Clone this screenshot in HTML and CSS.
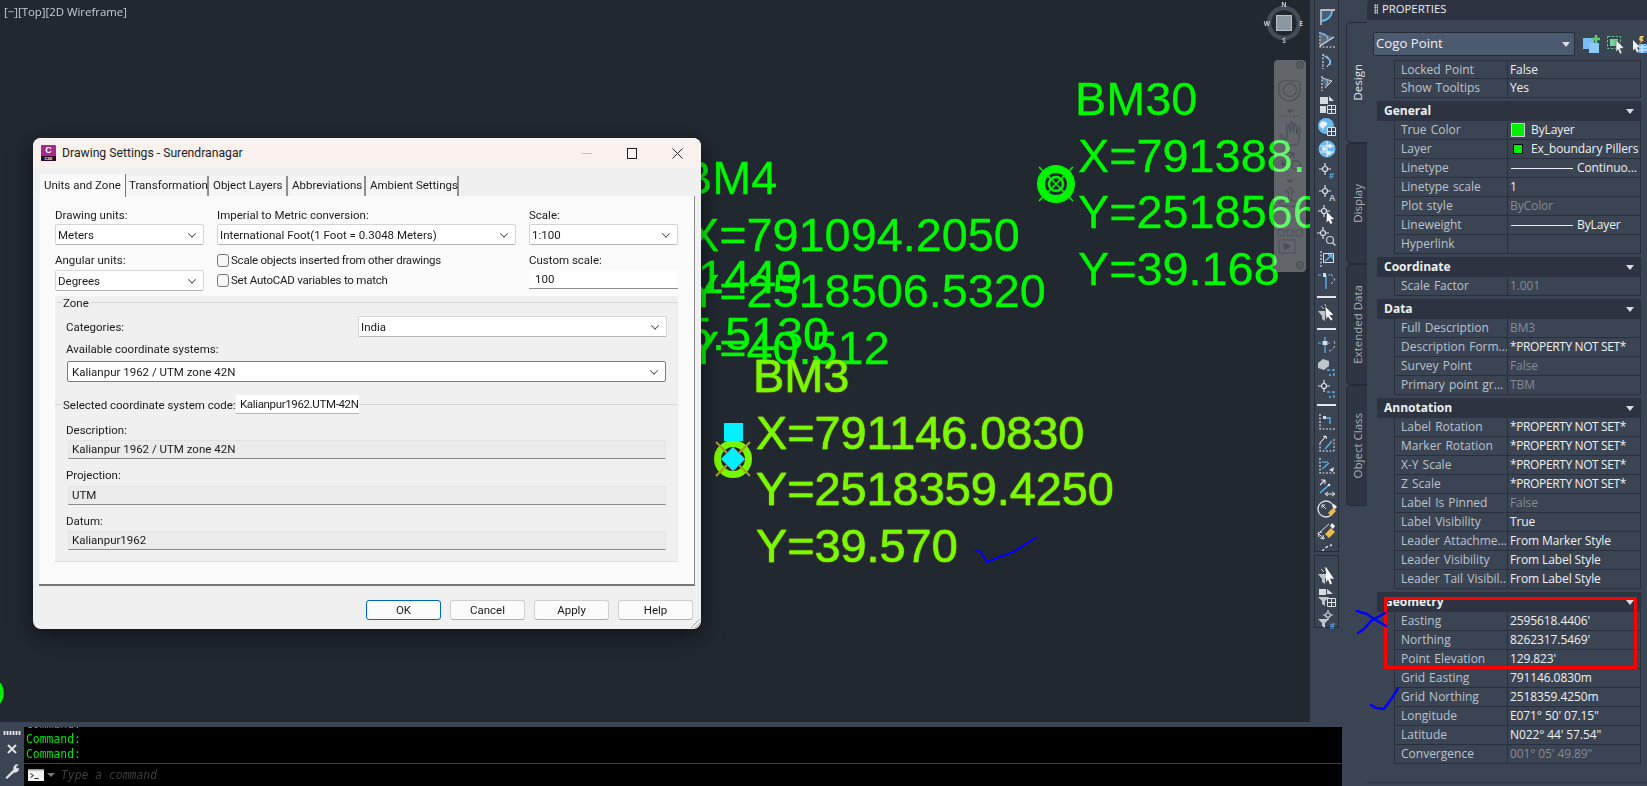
FILE: index.html
```html
<!DOCTYPE html>
<html lang="en">
<head>
<meta charset="utf-8">
<title>Drawing Settings - Surendranagar</title>
<link rel="stylesheet" href="styles.css">
</head>
<body>
<div class="app">
  <div class="left">
    <main class="canvas">
      <div class="vp-label">[−][Top][2D Wireframe]</div>

      <div class="cad c-b4"><span class="cad-t">BM4</span><span>X=791094.2050</span><span>Y=2518506.5320</span><span>Y=40.512</span></div>
      <div class="cad c-x1">1449</div>
      <div class="cad c-x2">5.5130</div>
      <div class="cad c-b30"><span class="cad-t">BM30</span><span>X=791388.</span><span>Y=2518566</span><span>Y=39.168</span></div>
      <div class="cad c-b3"><span class="cad-t">BM3</span><span>X=791146.0830</span><span>Y=2518359.4250</span><span>Y=39.570</span></div>

      <svg class="overlay" width="1310" height="722" viewBox="0 0 1310 722" fill="none">
        <g stroke="#00f500">
          <circle cx="1056" cy="184" r="15" stroke-width="8"/>
          <circle cx="1056" cy="184" r="7" stroke-width="2.5"/>
          <path d="M1039 167l34 34M1073 167l-34 34" stroke-width="1.6"/>
        </g>
        <circle cx="733" cy="459" r="15.5" stroke="#78f800" stroke-width="7"/>
        <path d="M716 442l34 34M750 442l-34 34" stroke="#a8a020" stroke-width="2"/>
        <rect x="724" y="423" width="19" height="18" fill="#00f0ff"/>
        <path d="M733 447l12 12-12 12-12-12z" fill="#00f0ff" stroke="#5a8a90"/>
        <ellipse cx="-10" cy="693" rx="12" ry="14" stroke="#00f500" stroke-width="3.5"/>
        <path d="M975 550l6 2 6 10 26-10 24-15" stroke="#0000ff" stroke-width="2"/>
      </svg>

      <div class="cube">
        <svg width="44" height="44" viewBox="0 0 44 44" fill="none">
          <circle cx="22" cy="22" r="15" stroke="#444c58" stroke-width="4.5"/>
          <rect x="14.500" y="14.500" width="15" height="15" fill="#8b96a1" stroke="#b8bfc6"/>
          <text class="cube-l" x="22" y="6">N</text>
          <text class="cube-l" x="22" y="42">S</text>
          <text class="cube-l" x="5" y="25">W</text>
          <text class="cube-l" x="39" y="25">E</text>
        </svg>
      </div>

      <div class="navbar">
        <svg width="32" height="212" viewBox="0 0 32 212" fill="none" stroke="#4a5059">
          <circle cx="26" cy="5" r="3.2" stroke-width="1.4"/>
          <path d="M24 3l4 4M28 3l-4 4" stroke-width=".8"/>
          <path d="M8 21h14a4 4 0 0 1 4 4v5a11 11 0 0 1-11 11 10 10 0 0 1-10-10v-7z" stroke-width="1.2"/>
          <circle cx="16" cy="30" r="6.5" stroke-width="1.2"/>
          <path d="M13 50h6l-3 3z" fill="#4a5059"/>
          <path d="M5 56h22" stroke-width=".6"/>
          <path d="M6 76l5 6c1 2 3 3 6 3h4c3 0 4-2 4-5l1-12c0-2-2-2-2 0l-1 6-1-9c0-2-2-2-2 0l-.5 8-1-10c0-2-2-2-2 0v10l-2-8c0-2-2-1-2 1l1 11-2 3-3-5c-1-1-3 0-3 1z" stroke-width="1.1"/>
          <path d="M8 105l12-12m0 0h-6m6 0v6M8 105h5m-5 0v-5" stroke-width="1.4"/>
          <circle cx="22" cy="105" r="4.5" stroke-width="1.2"/>
          <path d="M25 108l3 3" stroke-width="1.4"/>
          <path d="M13 120h6l-3 3z" fill="#4a5059"/>
          <path d="M16 127l-4 5h2.500v8h3v-8h2.500z" stroke-width="1.1"/>
          <path d="M5 143l5-4v2h8c4 0 8 2 8 5-4 2-8 0-10 0h-6v2z" stroke-width="1.1"/>
          <rect x="4" y="170" width="6" height="6" stroke-width="1"/>
          <rect x="13" y="170" width="6" height="6" stroke-width="1"/>
          <rect x="22" y="170" width="6" height="6" stroke-width="1"/>
          <rect x="5" y="180" width="16" height="13" stroke-width="1"/>
          <path d="M10 183l7 3.500-7 3.500z" fill="#4a5059"/>
          <circle cx="26" cy="205" r="3.2" stroke-width="1.4"/>
          <path d="M24 205h4" stroke-width="1.2"/>
        </svg>
      </div>

      <section class="dialog">
        <header class="dlg-title">
          <span class="app-ico"><b>C</b><i>C3D</i></span>
          <span class="dlg-name">Drawing Settings - Surendranagar</span>
          <span class="winbtn min"></span>
          <span class="winbtn max"></span>
          <svg class="winclose" width="11" height="11" viewBox="0 0 11 11"><path d="M.5.5l10 10M10.500.5l-10 10" stroke="#222" fill="none"/></svg>
        </header>
        <nav class="tabs">
          <span class="tab active">Units and Zone</span>
          <span class="tab t2">Transformation</span>
          <span class="tab t3">Object Layers</span>
          <span class="tab t4">Abbreviations</span>
          <span class="tab t5">Ambient Settings</span>
        </nav>
        <div class="pane">
          <div class="cols">
            <div class="col c-sm">
              <label class="lbl">Drawing units:</label>
              <div class="combo"><span>Meters</span><i class="chev"></i></div>
              <label class="lbl mt6">Angular units:</label>
              <div class="combo mt1"><span>Degrees</span><i class="chev"></i></div>
            </div>
            <div class="col c-lg">
              <label class="lbl">Imperial to Metric conversion:</label>
              <div class="combo"><span>International Foot(1 Foot = 0.3048 Meters)</span><i class="chev"></i></div>
              <div class="check mt6"><i class="box"></i>Scale objects inserted from other drawings</div>
              <div class="check mt2"><i class="box"></i>Set AutoCAD variables to match</div>
            </div>
            <div class="col c-sm">
              <label class="lbl">Scale:</label>
              <div class="combo"><span>1:100</span><i class="chev"></i></div>
              <label class="lbl mt6">Custom scale:</label>
              <div class="input mt1">100</div>
            </div>
          </div>
          <fieldset class="zone">
            <div class="legend"><span>Zone</span></div>
            <div class="cat-row">
              <label class="lbl">Categories:</label>
              <div class="combo w309"><span>India</span><i class="chev"></i></div>
            </div>
            <label class="lbl in mt3">Available coordinate systems:</label>
            <div class="combo strong"><span>Kalianpur 1962 / UTM zone 42N</span><i class="chev"></i></div>
            <div class="code-row">
              <span class="code-lbl">Selected coordinate system code:</span>
              <span class="code-val">Kalianpur1962.UTM-42N</span>
            </div>
            <label class="lbl in mt7">Description:</label>
            <div class="ro mt1">Kalianpur 1962 / UTM zone 42N</div>
            <label class="lbl in mt7">Projection:</label>
            <div class="ro mt2">UTM</div>
            <label class="lbl in mt7">Datum:</label>
            <div class="ro mt1">Kalianpur1962</div>
          </fieldset>
        </div>
        <footer class="dlg-foot">
          <button class="btn primary">OK</button>
          <button class="btn">Cancel</button>
          <button class="btn">Apply</button>
          <button class="btn">Help</button>
        </footer>
        <svg class="grip" width="12" height="12" viewBox="0 0 12 12"><path d="M11 2l-9 9M11 6l-5 5M11 10l-1 1" stroke="#a9a9a9" fill="none"/></svg>
      </section>
    </main>
    <div class="strip"></div>
    <div class="cmd">
      <div class="cmd-side">
        <span class="dots"></span>
        <svg width="12" height="12" viewBox="0 0 12 12"><path d="M2 2l8 8M10 2l-8 8" stroke="#dfe3e8" stroke-width="2"/></svg>
        <svg width="16" height="16" viewBox="0 0 16 16"><path d="M1.500 14.500l8-8a4 4 0 0 1 5-5l-2.500 2.500 1 1.500 2-.5a4 4 0 0 1-5 4.500l-7 6.500z" fill="#dfe3e8"/></svg>
      </div>
      <div class="cmd-main">
        <div class="cmd-hist">
          <div class="cmd-line">Command:</div>
          <div class="cmd-line">Command:</div>
          <div class="cmd-line">Command:</div>
        </div>
        <div class="cmd-input">
          <svg width="16" height="12" viewBox="0 0 16 12"><rect width="16" height="12" fill="#f2f2f2"/><path d="M0 0h16v1.500H0z" fill="#9a9a9a"/><path d="M2.500 4.500l3 2-3 2M6.500 9.500h4" stroke="#222" fill="none"/></svg>
          <i class="cmd-arrow"></i>
          <span class="cmd-ph">Type a command</span>
        </div>
      </div>
    </div>
  </div>

  <aside class="side">
    <div class="tools">
      <div class="tgroup g1">
        <svg class="ti" viewBox="0 0 20 20" fill="none"><path d="M18 3H4v15" stroke="#dfe3e8" stroke-width="1.300"/><path d="M5 4h10c0 5-4 9-10 10z" fill="#5aa7e0" opacity=".3"/><path d="M15 4c0 5-4 9-10 10" stroke="#6bb7ee" stroke-width="1.800"/></svg>
        <svg class="ti" viewBox="0 0 20 20" fill="none"><path d="M3 3v15h15" stroke="#dfe3e8" stroke-width="1.200" stroke-dasharray="2 1.500"/><path d="M3 17L17 8 3 4z" fill="#8a94a0" opacity=".5"/><path d="M3 17L17 8" stroke="#dfe3e8" stroke-width="1.100"/><path d="M3 4c5 1 8 2 8 8" stroke="#6bb7ee" stroke-width="1.500"/></svg>
        <svg class="ti" viewBox="0 0 20 20" fill="none"><path d="M6 3v15" stroke="#dfe3e8" stroke-width="1.200" stroke-dasharray="2 1.500"/><path d="M6 4l8 6-4 6" stroke="#dfe3e8" stroke-width="1"/><path d="M9 5c3 2 5 5 4 9" stroke="#6bb7ee" stroke-width="1.800"/></svg>
        <svg class="ti" viewBox="0 0 20 20" fill="none"><path d="M5 3v15" stroke="#dfe3e8" stroke-width="1.200" stroke-dasharray="2 1.500"/><path d="M5 5l10 3-7 7" fill="#8a94a0" fill-opacity=".5" stroke="#dfe3e8" stroke-width=".9"/><path d="M9 6c2 2 2 3 1 6" stroke="#6bb7ee" stroke-width="1.500"/></svg>
        <svg class="ti" viewBox="0 0 20 20"><path d="M3 2h8v7H3zM3 11h6v7H3z" fill="#d9dde2"/><path d="M12 1l5 5h-5z" fill="#d9dde2"/><path d="M10.500 10.500h8v8h-8zM14.500 10.500v8M10.500 14.500h8" stroke="#dfe3e8" fill="#3b4453"/></svg>
        <svg class="ti" viewBox="0 0 20 20"><circle cx="9" cy="9" r="8" fill="#6bb7ee"/><path d="M5 4c2 1 4 0 5 2s-2 3-3 5-3 0-4-2 1-4 2-5z" fill="#e8f2fa"/><path d="M10.500 10.500h8v8h-8zM14.500 10.500v8M10.500 14.500h8" stroke="#dfe3e8" fill="#3b4453"/></svg>
        <svg class="ti" viewBox="0 0 20 20" fill="none"><circle cx="10" cy="10" r="8.500" fill="#6bb7ee"/><path d="M3 7h14M3 13h14M10 2v16" stroke="#e8f2fa" stroke-width="1.200"/><circle cx="7" cy="10" r="2" fill="#e8f2fa"/><circle cx="13" cy="7" r="2" fill="#e8f2fa"/><circle cx="12" cy="14" r="2" fill="#e8f2fa"/></svg>
        <svg class="ti" viewBox="0 0 20 20" fill="none"><circle cx="8" cy="8" r="2.500" stroke="#dfe3e8" stroke-width="1.200"/><path d="M8 2v3M8 11v3M2 8h3M11 8h3" stroke="#dfe3e8" stroke-width="1.200"/><text class="ti-t" x="12" y="18" fill="#5cb3f0">#</text></svg>
        <svg class="ti" viewBox="0 0 20 20" fill="none"><circle cx="8" cy="8" r="2.500" stroke="#dfe3e8" stroke-width="1.200"/><path d="M8 2v3M8 11v3M2 8h3M11 8h3" stroke="#dfe3e8" stroke-width="1.200"/><text class="ti-t" x="12" y="18" fill="#bfc5cc">A</text></svg>
        <svg class="ti" viewBox="0 0 20 20" fill="none"><circle cx="7" cy="6" r="2.500" stroke="#dfe3e8" stroke-width="1.200"/><path d="M7 0v3M7 9v3M1 6h3M10 6h3" stroke="#dfe3e8" stroke-width="1.200"/><path d="M10 7l7 7-3.500.5 2 3.500-2 1-2-3.500-2 2z" fill="#f2f4f6"/></svg>
        <svg class="ti" viewBox="0 0 20 20" fill="none"><circle cx="6" cy="6" r="2.500" stroke="#dfe3e8" stroke-width="1.200"/><path d="M6 0v3M6 9v3M0 6h3M9 6h3" stroke="#dfe3e8" stroke-width="1.200"/><circle cx="13" cy="13" r="3.500" stroke="#c6ccd3" stroke-width="1.200"/><path d="M15.500 15.500l3 3" stroke="#c6ccd3" stroke-width="1.500"/></svg>
        <svg class="ti" viewBox="0 0 20 20" fill="none"><path d="M4 2v16" stroke="#dfe3e8" stroke-width="1.200" stroke-dasharray="2 1.500"/><path d="M6.500 4.500h10v9h-10z" stroke="#dfe3e8" stroke-width="1"/><path d="M8 12l7-6m0 0h-4m4 0v4" stroke="#6bb7ee" stroke-width="1.300"/></svg>
        <svg class="ti" viewBox="0 0 20 20" fill="none"><path d="M1 4h12" stroke="#5cb3f0" stroke-width="1.200" stroke-dasharray="3 2"/><path d="M9 4v14" stroke="#5cb3f0" stroke-width="1.400"/><path d="M14 3l4 6-4 4" stroke="#bfc5cc" stroke-dasharray="3 2"/><rect x="6" y="2" width="3" height="4" fill="#d9dde2"/></svg>
        <i class="tsep"></i>
        <svg class="ti" viewBox="0 0 20 20" fill="none"><path d="M1 8h11l-4 5v5l-3-2v-3z" fill="#bfc5cc"/><path d="M8 1l1 4M4 3l3 3" stroke="#bfc5cc"/><path d="M8 3l9 9-4 .5 3 4-2 1.500-3-4-2 3z" fill="#f7f8f9" stroke="#2a303b" stroke-width=".6"/></svg>
        <i class="tsep"></i>
        <svg class="ti" viewBox="0 0 20 20" fill="none"><path d="M1 8h12" stroke="#5cb3f0" stroke-width="1.200" stroke-dasharray="3 2"/><path d="M8 2v4M8 10v8" stroke="#5cb3f0" stroke-width="1.200"/><rect x="5.500" y="6" width="5" height="4" fill="#d9dde2"/><path d="M17 6c2 4 0 9-5 10" stroke="#bfc5cc" stroke-dasharray="3 2"/></svg>
        <svg class="ti" viewBox="0 0 20 20" fill="none"><path d="M1 6l5-4 6 2v5l-5 4-6-2z" fill="#bfc5cc"/><path d="M10 13h7v5h-5" stroke="#5cb3f0" stroke-width="1.300" stroke-dasharray="3 2"/></svg>
        <svg class="ti" viewBox="0 0 20 20" fill="none"><circle cx="7" cy="7" r="2.500" stroke="#dfe3e8" stroke-width="1.200"/><path d="M7 1v3M7 10v3M1 7h3M10 7h3" stroke="#dfe3e8" stroke-width="1.200"/><path d="M10 13h7v5h-5" stroke="#5cb3f0" stroke-width="1.300" stroke-dasharray="3 2"/></svg>
        <i class="tsep"></i>
        <svg class="ti" viewBox="0 0 20 20" fill="none"><path d="M3 3v15h15" stroke="#dfe3e8" stroke-width="1.200" stroke-dasharray="2 1.500"/><path d="M7 7h6v6" stroke="#5cb3f0" stroke-width="1.300"/><rect x="6" y="5" width="3" height="3" fill="#d9dde2"/></svg>
        <svg class="ti" viewBox="0 0 20 20" fill="none"><path d="M3 10v8h14" stroke="#dfe3e8" stroke-width="1.200" stroke-dasharray="2 1.500"/><path d="M17 6v12" stroke="#dfe3e8" stroke-dasharray="2 1.500"/><path d="M3 10l6-7m0 0l-3 .5M9 3l.5 3" stroke="#dfe3e8" stroke-width="1.100"/><path d="M8 16l7-8" stroke="#5cb3f0" stroke-width="1.400"/></svg>
        <svg class="ti" viewBox="0 0 20 20" fill="none"><path d="M3 3v15h15" stroke="#dfe3e8" stroke-width="1.200" stroke-dasharray="2 1.500"/><path d="M5 14l7-6" stroke="#5cb3f0" stroke-width="1.400"/><path d="M12 15l5-3-1 5z" fill="#d9dde2"/><path d="M5 7h6" stroke="#5cb3f0" stroke-width="1.200"/></svg>
        <svg class="ti" viewBox="0 0 20 20" fill="none"><path d="M3 8l5-5m0 0H4m4 0v4" stroke="#dfe3e8" stroke-width="1.100"/><path d="M3 16L13 7" stroke="#5cb3f0" stroke-width="1.600"/><path d="M8 17h10m-3-2l3 2-3 2M8 17l3-2m-3 2l3 2" stroke="#dfe3e8" stroke-width="1"/><circle cx="12" cy="8" r="1.300" fill="#dfe3e8"/></svg>
        <svg class="ti" viewBox="0 0 20 20" fill="none"><circle cx="9" cy="10" r="8" stroke="#dfe3e8" stroke-width="1.300"/><path d="M5 6l4 4m-4-4h3m-3 0v3" stroke="#dfe3e8" stroke-width="1"/><path d="M11 14l5-5 3 3-5 5z" fill="#f0b84c"/><path d="M15 7l2-2 3 3-2 2z" fill="#f2f4f6"/></svg>
        <svg class="ti" viewBox="0 0 20 20" fill="none"><path d="M1 12l6 6M1 12l4-1M1 12l1 4M7 18l-1-4M7 18l-4-1M3 11l9-8" stroke="#dfe3e8" stroke-width="1"/><path d="M8 13l6-6 4 4-6 6z" fill="#f0b84c"/><path d="M13 5l2-3 3 3-2 3z" fill="#f2f4f6"/></svg>
        <svg class="ti" viewBox="0 0 20 20" fill="none"><path d="M2 18C3 9 7 4 15 2" stroke="#dfe3e8" stroke-width="1.300" stroke-dasharray="3 2"/><rect x="10" y="8" width="9" height="11" fill="#f2f4f6"/><path d="M11 9h7v2.500h-7z" fill="#3d8fd6"/><path d="M11.500 13h2m1 0h2M11.500 15h2m1 0h2M11.500 17.200h2m1 0h2" stroke="#3d8fd6" stroke-width="1.200"/></svg>
      </div>
      <div class="tgroup g2">
        <svg class="ti" viewBox="0 0 20 20" fill="none"><path d="M1 8h11l-4 5v5l-3-2v-3z" fill="#bfc5cc"/><path d="M8 1l1 4M4 3l3 3" stroke="#bfc5cc"/><path d="M9 1l8 12-4-.5 2 5-2 1-2-5-2 3z" fill="#f7f8f9"/></svg>
        <svg class="ti" viewBox="0 0 20 20"><path d="M2 1h7v6H2zM10 1l6 5h-6z" fill="#d9dde2"/><path d="M1 9h11l-4 4v5l-3-2v-3z" fill="#bfc5cc"/><path d="M10.500 10.500h8v8h-8zM14.500 10.500v8M10.500 14.500h8" stroke="#dfe3e8" fill="#3b4453"/></svg>
        <svg class="ti" viewBox="0 0 20 20" fill="none"><path d="M1 9h11l-4 4v5l-3-2v-3z" fill="#bfc5cc"/><circle cx="11" cy="5" r="2.300" stroke="#dfe3e8" stroke-width="1.100"/><path d="M11 0v2M11 8v2M6 5h2M14 5h2" stroke="#dfe3e8" stroke-width="1.100"/><text class="ti-t" x="13" y="19" fill="#5cb3f0">#</text></svg>
      </div>
    </div>

    <div class="vtabs">
      <div class="vtab on"><span>Design</span></div>
      <div class="vtab"><span>Display</span></div>
      <div class="vtab"><span>Extended Data</span></div>
      <div class="vtab"><span>Object Class</span></div>
    </div>

    <div class="main">
      <div class="ptitle"><i class="gripdots"></i><span>PROPERTIES</span></div>
      <div class="ptools">
        <div class="pselect"><span>Cogo Point</span><i class="tri"></i></div>
        <svg width="18" height="18" viewBox="0 0 18 18"><rect y="3" width="11" height="11" fill="#79bdf2"/><rect x="6" y="8" width="10" height="10" fill="#8cc9f7"/><path d="M13 0v8M9 4h8" stroke="#5bd07c" stroke-width="2.400"/></svg>
        <svg width="18" height="20" viewBox="0 0 18 20"><rect x=".5" y="1.500" width="13" height="12" fill="none" stroke="#55cf7e" stroke-dasharray="2.500 1.500"/><rect x="3" y="4" width="8" height="7" fill="#73d49a"/><path d="M9 5l8 8-4 .5 2 4.500-2 1-2-4.500-2 2.500z" fill="#eef0f2" stroke="#3b4453" stroke-width=".5"/></svg>
        <svg class="lastico" width="14" height="20" viewBox="0 0 14 20"><path d="M0 5l7 7-3 .5 2 4-2 1-2-4-2 2z" fill="#eef0f2"/><path d="M7 1l-1 4 2 1-2 3 5-4-2-1 2-3z" fill="#e6c560"/><path d="M6 9h8v9H6z" fill="#6db8ee"/><path d="M6 12h8M6 15h8M9 9v9" stroke="#e8f2fa"/></svg>
      </div>

      <div class="rows top">
        <div class="row"><span>Locked Point</span><span>False</span></div>
        <div class="row"><span>Show Tooltips</span><span>Yes</span></div>
      </div>

      <div class="sec"><b>General</b><i class="tri"></i></div>
      <div class="rows">
        <div class="row"><span>True Color</span><span class="val"><i class="sw big"></i>ByLayer</span></div>
        <div class="row"><span>Layer</span><span class="val"><i class="sw small"></i>Ex_boundary Pillers</span></div>
        <div class="row"><span>Linetype</span><span class="val"><i class="ln"></i>Continuo...</span></div>
        <div class="row"><span>Linetype scale</span><span>1</span></div>
        <div class="row"><span>Plot style</span><span class="dim">ByColor</span></div>
        <div class="row"><span>Lineweight</span><span class="val"><i class="ln"></i>ByLayer</span></div>
        <div class="row"><span>Hyperlink</span><span></span></div>
      </div>

      <div class="sec"><b>Coordinate</b><i class="tri"></i></div>
      <div class="rows">
        <div class="row"><span>Scale Factor</span><span class="dim">1.001</span></div>
      </div>

      <div class="sec"><b>Data</b><i class="tri"></i></div>
      <div class="rows">
        <div class="row"><span>Full Description</span><span class="dim">BM3</span></div>
        <div class="row"><span>Description Form...</span><span class="caps">*PROPERTY NOT SET*</span></div>
        <div class="row"><span>Survey Point</span><span class="dim">False</span></div>
        <div class="row"><span>Primary point gr...</span><span class="dim">TBM</span></div>
      </div>

      <div class="sec"><b>Annotation</b><i class="tri"></i></div>
      <div class="rows">
        <div class="row"><span>Label Rotation</span><span class="caps">*PROPERTY NOT SET*</span></div>
        <div class="row"><span>Marker Rotation</span><span class="caps">*PROPERTY NOT SET*</span></div>
        <div class="row"><span>X-Y Scale</span><span class="caps">*PROPERTY NOT SET*</span></div>
        <div class="row"><span>Z Scale</span><span class="caps">*PROPERTY NOT SET*</span></div>
        <div class="row"><span>Label Is Pinned</span><span class="dim">False</span></div>
        <div class="row"><span>Label Visibility</span><span>True</span></div>
        <div class="row"><span>Leader Attachme...</span><span>From Marker Style</span></div>
        <div class="row"><span>Leader Visibility</span><span>From Label Style</span></div>
        <div class="row"><span>Leader Tail Visibil...</span><span>From Label Style</span></div>
      </div>

      <div class="sec"><b>Geometry</b><i class="tri"></i></div>
      <div class="rows">
        <div class="row"><span>Easting</span><span>2595618.4406'</span></div>
        <div class="row"><span>Northing</span><span>8262317.5469'</span></div>
        <div class="row"><span>Point Elevation</span><span>129.823'</span></div>
        <div class="row"><span>Grid Easting</span><span>791146.0830m</span></div>
        <div class="row"><span>Grid Northing</span><span>2518359.4250m</span></div>
        <div class="row"><span>Longitude</span><span>E071° 50' 07.15"</span></div>
        <div class="row"><span>Latitude</span><span>N022° 44' 57.54"</span></div>
        <div class="row"><span>Convergence</span><span class="dim">001° 05' 49.89"</span></div>
      </div>
    </div>

    <div class="redbox"></div>
    <svg class="marks" width="50" height="110" viewBox="0 0 50 110" fill="none" stroke="#0000ff" stroke-width="2.400" stroke-linecap="round">
      <path d="M3 1l10 3 7 5 12 7"/>
      <path d="M31 3l-14 8-7 8-6 4"/>
      <path d="M17 95l5 3 8 1 8-11 6-10"/>
    </svg>
  </aside>
</div>
</body>
</html>
```

FILE: styles.css
```css
* { box-sizing: border-box; }
html, body { margin: 0; padding: 0; height: 100%; overflow: hidden; background: #3b4453; }
.app { display: flex; width: 1647px; height: 786px; font-family: "Open Sans", "Noto Sans", sans-serif; }

/* left column: drawing + command line */
.left { width: 1310px; height: 786px; display: flex; flex-direction: column; flex: none; position: relative; z-index: 2; }
.canvas { position: relative; height: 722px; background: #212830; overflow: hidden; flex: none; }
.strip { height: 5px; background: #3b4453; flex: none; }
.vp-label { position: absolute; left: 4px; top: 4px; font: 11.400px/16px "Open Sans", sans-serif; color: #c9ced4; }

.cad { position: absolute; font: 46.800px/56.500px "Liberation Sans", Arial, sans-serif; color: #00f800; white-space: nowrap; -webkit-text-stroke: .3px #00f800; }
.cad span { display: block; }
.cad-t { margin-left: -3px; }
.c-b4 { left: 688px; top: 150px; }
.c-b4 .cad-t { margin-left: -7px; }
.c-b30 { left: 1078px; top: 71px; }
.c-b3 { left: 756px; top: 348px; color: #78fa00; -webkit-text-stroke: .5px #78fa00; text-shadow: 0 0 2px #94801a, 0 0 1px #94801a; }
.c-x1 { left: 698px; top: 249px; }
.c-x2 { left: 686px; top: 306px; }
.overlay { position: absolute; left: 0; top: 0; pointer-events: none; }

.cube { position: absolute; left: 1262px; top: 1px; line-height: 0; }
.cube-l { font: 700 6.500px "Open Sans", sans-serif; fill: #c6ccd3; text-anchor: middle; }

.navbar { position: absolute; left: 1274px; top: 60px; width: 32px; height: 212px; background: #62666a; mix-blend-mode: lighten; border-radius: 4px; line-height: 0; }

/* dialog */
.dialog { position: absolute; left: 33px; top: 138px; width: 668px; height: 491px; background: #f0f0f0; border-radius: 8px; overflow: hidden; box-shadow: 0 6px 22px rgba(0, 0, 0, .55); color: #1a1a1a; font: 11.500px/18px Roboto, sans-serif; display: flex; flex-direction: column; }
.dlg-title { height: 30px; flex: none; background: #f9f1ee; display: flex; align-items: center; position: relative; padding-left: 8px; }
.app-ico { width: 15px; height: 16px; background: #a42a8e; border-radius: 1px; position: relative; display: block; flex: none; text-align: center; color: #fff; overflow: hidden; }
.app-ico b { display: block; font: 700 9px/11px "Liberation Sans", sans-serif; }
.app-ico i { display: block; background: #2a0c26; font: 700 4px/5px "Liberation Sans", sans-serif; font-style: normal; }
.dlg-name { margin-left: 6px; font-size: 12.200px; color: #222; flex: 1; }
.winbtn { display: block; flex: none; }
.min { width: 11px; height: 1px; background: #c9c5c3; margin-right: 35px; margin-top: 1px; }
.max { width: 10px; height: 11px; border: 1px solid #222; margin-right: 35px; }
.winclose { margin-right: 18px; flex: none; }

.tabs { height: 28px; flex: none; display: flex; align-items: flex-end; padding-left: 7px; position: relative; z-index: 1; }
.tab { height: 20px; line-height: 18px; border-right: 2px solid #8e8e8e; background: #f5f5f5; padding-left: 3px; margin-right: 1px; white-space: nowrap; flex: none; }
.tab.active { width: 86px; height: 23px; margin-bottom: -1px; background: #fafafa; border-right: 1px solid #777; padding-left: 4px; line-height: 22px; margin-right: 0; }
.t2 { width: 83px; }
.t3 { width: 78px; }
.t4 { width: 77px; }
.t5 { width: 92px; }

.pane { height: 390px; flex: none; margin-left: 6px; width: 656px; background: #fafafa; border-right: 1px solid #8a8a8a; border-bottom: 2px solid #777; padding: 10px 0 0 16px; }
.cols { display: flex; gap: 13px; }
.col { display: flex; flex-direction: column; }
.c-sm { width: 149px; }
.c-lg { width: 299px; }
.lbl { display: block; height: 18px; white-space: nowrap; }
.combo { height: 21px; background: #fff; border: 1px solid #d4d4d4; border-bottom-color: #b5b5b5; border-radius: 2px; display: flex; align-items: center; justify-content: space-between; padding: 0 8px 0 2px; white-space: nowrap; flex: none; }
.chev { width: 6px; height: 6px; border-right: 1px solid #555; border-bottom: 1px solid #555; transform: rotate(45deg) translate(-1px, -1px); display: block; flex: none; }
.input { height: 19px; background: #fff; border-bottom: 1px solid #8d8d8d; padding-left: 6px; line-height: 18px; }
.check { display: flex; align-items: center; height: 18px; white-space: nowrap; letter-spacing: -.22px; }
.box { width: 12px; height: 13px; border: 1px solid #777; border-radius: 3px; background: #f7f7f7; margin-right: 2px; display: block; flex: none; }
.mt1 { margin-top: 1px; } .mt2 { margin-top: 2px; } .mt3 { margin-top: 3px; } .mt6 { margin-top: 6px; } .mt7 { margin-top: 7px; }

.zone { margin: 5px 0 0; padding: 0; border: 0; width: 623px; height: 266px; background: #f0f0f0; border-bottom: 1px solid #e0e0e0; min-width: 0; }
.legend { height: 14px; padding-left: 8px; background: linear-gradient(#d6d6d6, #d6d6d6) 2px 6px / 621px 1px no-repeat; line-height: 14px; }
.legend span { background: #f0f0f0; padding-right: 2px; display: inline-block; }
.cat-row { display: flex; justify-content: space-between; align-items: center; padding: 0 11px; margin-top: 6px; }
.w309 { width: 309px; }
.in { padding-left: 11px; }
.strong { width: 599px; margin: 3px 0 0 12px; border: 1px solid #7c7c7c; padding: 0 8px 0 4px; }
.code-row { display: flex; align-items: center; height: 19px; margin-top: 13px; padding-left: 8px; background: linear-gradient(#d6d6d6, #d6d6d6) 0 9px / 100% 1px no-repeat; }
.code-lbl { background: #f0f0f0; width: 166px; flex: none; white-space: nowrap; }
.code-val { margin-left: 7px; width: 123px; height: 19px; background: #fff; border-bottom: 1px solid #b5b5b5; padding-left: 4px; line-height: 18px; flex: none; white-space: nowrap; letter-spacing: -.35px; }
.ro { margin-left: 13px; width: 598px; height: 19px; background: #ebebeb; border: 1px solid #e3e3e3; border-bottom: 1px solid #8a8a8a; padding-left: 3px; line-height: 17px; }

.dlg-foot { flex: 1; display: flex; justify-content: flex-end; gap: 9px; padding: 14px 8px 0 0; align-items: flex-start; }
.btn { width: 75px; height: 20px; background: #fbfbfb; border: 1px solid #d0d0d0; border-bottom-color: #b0b0b0; border-radius: 3px; font: 11.500px/16px Roboto, sans-serif; color: #1a1a1a; padding: 0; }
.btn.primary { border: 1.500px solid #0067c0; }
.grip { position: absolute; right: 0; bottom: 0; }

/* command line */
.cmd { width: 1342px; height: 59px; display: flex; flex: none; position: relative; z-index: 3; }
.cmd-side { width: 24px; background: #3b4453; flex: none; display: flex; flex-direction: column; align-items: center; padding-top: 4px; gap: 8px; }
.dots { width: 18px; height: 4px; display: block; background: radial-gradient(circle, #e3e6ea 1px, transparent 1.200px) 0 0 / 3px 2px; }
.cmd-main { flex: 1; background: #000; display: flex; flex-direction: column; }
.cmd-hist { height: 37px; overflow: hidden; border-bottom: 1px solid #39404b; position: relative; padding-left: 2px; display: flex; flex-direction: column; justify-content: flex-end; padding-bottom: 1px; }
.cmd-line { font: 11.400px/15px "DejaVu Sans Mono", monospace; color: #00e800; flex: none; }
.cmd-input { flex: 1; display: flex; align-items: center; padding-left: 4px; font: italic 11.400px "DejaVu Sans Mono", monospace; }
.cmd-arrow { width: 0; height: 0; border: 4px solid transparent; border-top: 4px solid #777; border-bottom: 0; margin-left: 3px; display: block; }
.cmd-ph { margin-left: 6px; color: #3e3e3e; }

/* right side */
.side { width: 337px; flex: none; display: flex; background: #3b4453; position: relative; height: 786px; }
.tools { width: 36px; flex: none; padding-left: 4px; }
.tgroup { width: 25px; border: 1px solid #262c36; border-top: 0; display: flex; flex-direction: column; align-items: center; }
.g1 { height: 552px; padding-top: 6px; overflow: hidden; }
.g2 { height: 73px; margin-top: 3px; border-top: 1px solid #262c36; padding-top: 9px; }
.ti { width: 20px; height: 20px; margin: 1px 0; flex: none; display: block; overflow: visible; }
.ti-t { font: 700 9px "Liberation Sans", sans-serif; }
.tsep { display: block; width: 19px; height: 2px; background: #e3e6ea; margin: 4px 0; flex: none; }

.vtabs { width: 21px; flex: none; padding-top: 22px; display: flex; flex-direction: column; }
.vtab { height: 121px; background: #2f3542; border: 1px solid #252a34; border-right: 0; border-radius: 5px 0 0 5px; display: flex; justify-content: center; padding-top: 0; flex: none; align-items: center; color: #a9b0ba; font-size: 11.500px; }
.vtab.on { background: #3b4453; color: #e6e9ed; }
.vtab span { writing-mode: vertical-rl; transform: rotate(180deg); white-space: nowrap; }

.main { width: 280px; flex: none; height: 783px; border-bottom: 1px solid #2c323d; font-size: 12px; }
.ptitle { height: 20px; background: #2d3340; display: flex; align-items: center; color: #eef0f2; border-radius: 4px 0 0 0; padding: 0 0 3px 7px; font-size: 11.300px; }
.gripdots { width: 4px; height: 10px; display: block; margin-right: 4px; background: radial-gradient(circle, #d5d9de .8px, transparent 1px) 0 0 / 2.500px 2.500px; }
.ptools { height: 40px; padding: 12px 0 0 6px; display: flex; align-items: flex-start; }
.ptools svg { margin: 3px 0 0 8px; flex: none; }
.ptools svg + svg { margin-left: 6px; }
.ptools .lastico { margin-left: 8px; }
.pselect { width: 204px; height: 24px; background: #4c5a70; border: 1px solid #282e39; border-radius: 2px; display: flex; align-items: center; justify-content: space-between; padding: 0 4px 2px 2px; color: #edf0f3; font-size: 13.200px; }
.tri { width: 0; height: 0; border: 4.500px solid transparent; border-top: 5px solid #d9dce0; border-bottom: 0; display: block; flex: none; margin-top: 2px; }

.rows { margin-left: 27px; width: 247px; }
.rows.top { border-top: 1px solid #2a303b; }
.row { display: grid; grid-template-columns: 112px 133px; height: 19px; line-height: 18px; border-bottom: 1px solid #2a303b; border-left: 1px solid #2a303b; border-right: 1px solid #2a303b; white-space: nowrap; }
.rows.top .row:first-child { height: 18px; }
.row span:first-child { padding-left: 6px; color: #bcc3cc; overflow: hidden; word-spacing: 1px; }
.row span:last-child { padding-left: 2px; color: #eef0f2; border-left: 1px solid #2a303b; overflow: hidden; letter-spacing: -.1px; }
.row span.caps { letter-spacing: -.38px; }
.row span.dim { color: #848b96; }
.val { display: flex; align-items: center; }
.sw { display: block; flex: none; background: #00f000; }
.sw.big { width: 14px; height: 14px; border: 1px solid #c9ced4; margin-right: 6px; margin-left: 1px; }
.sw.small { width: 10px; height: 10px; border: 1px solid #000; margin: 0 8px 0 3px; }
.ln { display: block; width: 62px; height: 1px; background: #eef0f2; margin: 0 4px 0 1px; flex: none; }

.sec { margin: 3px 0 0 10px; width: 264px; height: 20px; background: #2d3340; display: flex; align-items: center; justify-content: space-between; padding: 0 7px 2px; color: #eef0f2; }
.sec b { font-weight: 700; font-size: 12px; }

.redbox { position: absolute; left: 74px; top: 597px; width: 253px; height: 72px; border: 3px solid #ff0000; pointer-events: none; }
.marks { position: absolute; left: 44px; top: 610px; pointer-events: none; }
```
